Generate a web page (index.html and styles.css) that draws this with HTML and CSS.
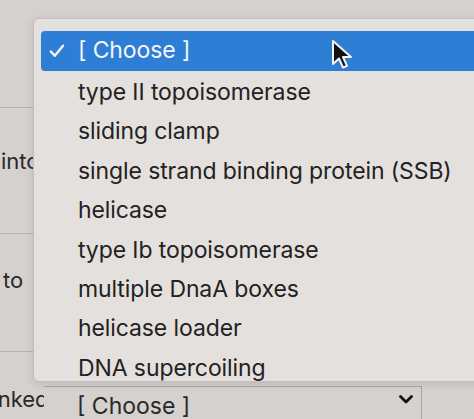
FILE: index.html
```html
<!DOCTYPE html>
<html>
<head>
<meta charset="utf-8">
<link rel="stylesheet" href="styles.css">
</head>
<body>
<div class="page">
  <div class="table">
    <div class="cell c1"></div>
    <div class="cell c2"><span class="frag">into</span></div>
    <div class="cell c3"><span class="frag">to</span></div>
    <div class="cell c4"><span class="frag f4">linked</span>
      <div class="select">
        <span class="sel-text">[ Choose ]</span>
        <svg class="chev" width="14" height="9" viewBox="0 0 14 9"><path d="M1.5 1.5 L7 7 L12.5 1.5" fill="none" stroke="#111" stroke-width="2.8" stroke-linecap="round" stroke-linejoin="round"/></svg>
      </div>
    </div>
  </div>

  <div class="menu">
    <div class="item active"><svg class="check" width="16" height="14" viewBox="0 0 16 14"><path d="M1.8 7.5 L5.8 11.8 L14 1.8" fill="none" stroke="#f4f6fa" stroke-width="2.4" stroke-linecap="round" stroke-linejoin="round"/></svg>[ Choose ]</div>
    <div class="item">type II topoisomerase</div>
    <div class="item">sliding clamp</div>
    <div class="item">single strand binding protein (SSB)</div>
    <div class="item">helicase</div>
    <div class="item">type Ib topoisomerase</div>
    <div class="item">multiple DnaA boxes</div>
    <div class="item">helicase loader</div>
    <div class="item">DNA supercoiling</div>
  </div>

  <svg class="cursor" width="24" height="32" viewBox="0 0 24 32"><path d="M2 2 L2 25 L8 19.5 L12 28.5 L16 26.8 L12 18 L20 18 Z" fill="#111" stroke="#f4f4f4" stroke-width="2" stroke-linejoin="round"/></svg>
</div>
</body>
</html>
```
FILE: styles.css
```css
html, body {
  margin: 0;
  padding: 0;
}
body {
  width: 474px;
  height: 419px;
  overflow: hidden;
  background: #d5d1ce;
  font-family: "Inter", "Liberation Sans", sans-serif;
  color: #232121;
}
.page {
  position: relative;
  width: 474px;
  height: 419px;
  overflow: hidden;
}
.table {
  display: flex;
  flex-direction: column;
}
.cell {
  border-bottom: 1px solid #b8b3b0;
  position: relative;
  width: 474px;
}
.c1 { height: 107px; }
.c2 { height: 125px; }
.c3 { height: 117px; }
.c4 { height: 69px; border-bottom: none; }
.frag {
  display: block;
  font-size: 22px;
  line-height: 26px;
  color: #2a2828;
  white-space: nowrap;
}
.c2 .frag { padding-top: 40px; padding-left: 1px; }
.c3 .frag { padding-top: 33px; padding-left: 3px; }
.c4 .frag { padding-top: 34px; margin-left: -13px; }
.select {
  position: absolute;
  left: 44px;
  top: 34px;
  width: 378px;
  height: 40px;
  background: #d5d1ce;
  border-top: 1px solid #aaa5a2;
  border-right: 1px solid #aaa5a2;
  display: flex;
  align-items: flex-start;
  justify-content: space-between;
  padding: 6px 8px 0 33px;
  box-sizing: border-box;
}
.sel-text {
  font-size: 23px;
  line-height: 26px;
  color: #2a2828;
}
.chev {
  margin-top: 2px;
}
.menu {
  position: absolute;
  left: 33px;
  top: 18px;
  width: 470px;
  height: 364px;
  background: #e3e0dd;
  border: 1px solid #c4bfbc;
  border-radius: 6px 0 0 6px;
  box-shadow: 0 2px 8px rgba(0,0,0,0.12);
  padding: 12px 0 0 7px;
  box-sizing: border-box;
}
.item {
  height: 39.4px;
  line-height: 39px;
  font-size: 23px;
  padding-left: 37px;
  white-space: nowrap;
  letter-spacing: -0.1px;
}
.item.active {
  height: 40px;
  margin-bottom: 2px;
  background: #2f7ed6;
  color: #f4f6fa;
  border-radius: 4px;
  position: relative;
}
.check {
  position: absolute;
  left: 8px;
  top: 13px;
}
.cursor {
  position: absolute;
  left: 331px;
  top: 39px;
}
```
